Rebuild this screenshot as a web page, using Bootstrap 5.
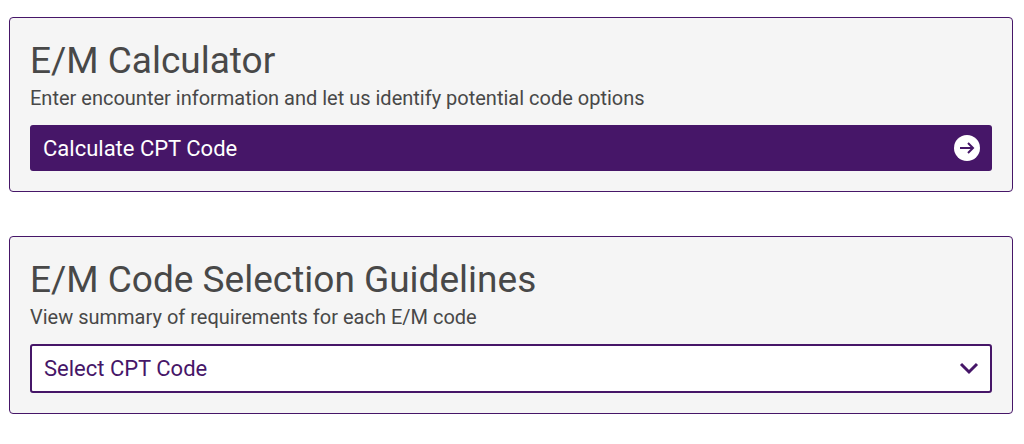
<!DOCTYPE html>
<html lang="en">
<head>
<meta charset="utf-8">
<meta name="viewport" content="width=device-width, initial-scale=1">
<title>E/M Calculator</title>
<link rel="stylesheet" href="https://cdn.jsdelivr.net/npm/bootstrap@5.3.0/dist/css/bootstrap.min.css">
<style>
  :root { --brand: #461668; --panel: #f5f5f5; --ink: #484848; }
  body { font-family: Roboto, sans-serif; color: var(--ink); }
  main { padding: 17px 11px 0 9px; }
  .tool-card { --bs-card-bg: var(--panel); --bs-card-border-color: var(--brand); --bs-card-border-radius: 4px; color: var(--ink); padding: 20px; }
  .tool-card + .tool-card { margin-top: 44px; }
  .tool-title { font-size: 37px; line-height: 46px; font-weight: 400; margin: 0; }
  .tool-text { font-size: 20px; line-height: 28px; margin: 0 0 13px; }
  .btn-brand { --bs-btn-color: #fff; --bs-btn-bg: var(--brand); --bs-btn-hover-color: #fff; --bs-btn-hover-bg: #361153; --bs-btn-font-size: 22px; --bs-btn-line-height: 32px; --bs-btn-border-radius: 3px; border: 0; padding: 8px 12px 6px 13px; }
  .code-select { color: var(--brand); border: 2px solid var(--brand); border-radius: 3px; background-color: #fff; font-size: 22px; line-height: 31px; padding: 7px 40px 7px 12px;
    background-image: url("data:image/svg+xml,%3Csvg xmlns='http://www.w3.org/2000/svg' viewBox='0 0 20 14'%3E%3Cpath d='M2 2l8 8 8-8' fill='none' stroke='%23461668' stroke-width='3'/%3E%3C/svg%3E"); background-size: 20px 14px; background-position: right 11px center; }
</style>
</head>
<body>
<main>
  <section class="card tool-card">
    <h1 class="tool-title">E/M Calculator</h1>
    <p class="tool-text">Enter encounter information and let us identify potential code options</p>
    <button type="button" class="btn btn-brand d-flex align-items-center justify-content-between w-100 text-start">
      Calculate CPT Code
      <svg width="26" height="28" viewBox="0 0 26 28" aria-hidden="true"><circle cx="13" cy="13" r="13" fill="#fff"/><path d="M6 13h13M14 8l5 5-5 5" fill="none" stroke="#461668" stroke-width="2"/></svg>
    </button>
  </section>
  <section class="card tool-card">
    <h2 class="tool-title">E/M Code Selection Guidelines</h2>
    <p class="tool-text"><label for="cpt">View summary of requirements for each E/M code</label></p>
    <select id="cpt" class="form-select code-select">
      <option>Select CPT Code</option>
    </select>
  </section>
</main>
<script src="https://cdn.jsdelivr.net/npm/bootstrap@5.3.0/dist/js/bootstrap.bundle.min.js"></script>
</body>
</html>
